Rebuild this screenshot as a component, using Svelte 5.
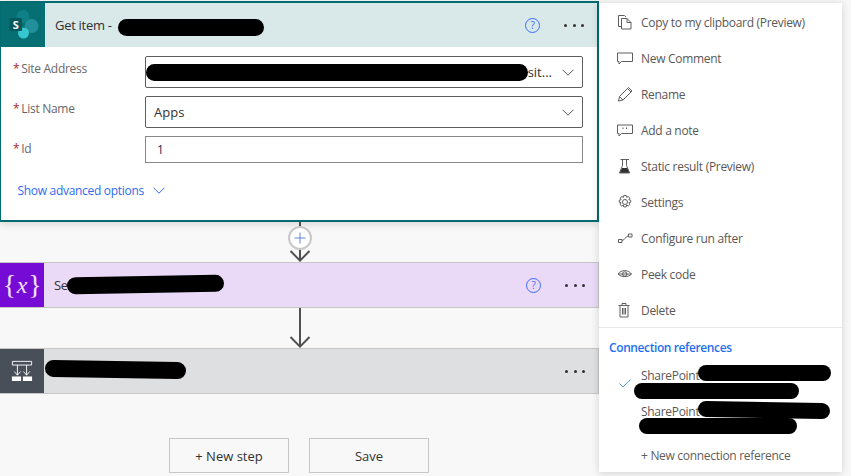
<script>
  const menuItems = [
    { label: 'Copy to my clipboard (Preview)', icon: 'copy' },
    { label: 'New Comment', icon: 'comment' },
    { label: 'Rename', icon: 'pencil' },
    { label: 'Add a note', icon: 'note' },
    { label: 'Static result (Preview)', icon: 'flask' },
    { label: 'Settings', icon: 'gear' },
    { label: 'Configure run after', icon: 'runafter' },
    { label: 'Peek code', icon: 'eye' },
    { label: 'Delete', icon: 'trash' }
  ]

  // the black scribbles over private names: x, y, width, height, tilt
  const scribbles = [
    [118, 19, 146, 17, 0],
    [146, 64, 382, 17, 0],
    [67, 276, 157, 17, -1],
    [45, 361, 141, 17, 1],
    [698, 365, 133, 16, 0],
    [634, 383, 165, 16, 0],
    [698, 402, 132, 16, 1],
    [639, 418, 158, 16, 0]
  ]
</script>

<div class="page">
  <main class="canvas">
    <section class="card active">
      <header class="head teal">
        <div class="tile teal-tile">
          <svg width="34" height="34" viewBox="0 0 34 34">
            <circle cx="17" cy="8.500" r="6.500" fill="#0f8085" />
            <circle cx="25.500" cy="18" r="7" fill="#21909a" />
            <circle cx="17.500" cy="25" r="5.500" fill="#37c6d0" />
            <rect x="3.500" y="10" width="12.500" height="13" rx="1" fill="#05585c" />
            <text x="9.700" y="20.500" class="s-letter">S</text>
          </svg>
        </div>
        <span class="title">Get item -</span>
        <span class="help">?</span>
        <span class="dots"><i></i><i></i><i></i></span>
      </header>
      <div class="body">
        <div class="row">
          <label><b>*</b>Site Address</label>
          <div class="input select tall">
            <span class="value end">sit...</span>
            <svg class="chev" width="12" height="7" viewBox="0 0 12 7"><path d="M.5.7 6 6.2 11.5.7" /></svg>
          </div>
        </div>
        <div class="row">
          <label><b>*</b>List Name</label>
          <div class="input select tall">
            <span class="value">Apps</span>
            <svg class="chev" width="12" height="7" viewBox="0 0 12 7"><path d="M.5.7 6 6.2 11.5.7" /></svg>
          </div>
        </div>
        <div class="row">
          <label><b>*</b>Id</label>
          <div class="input plain"><span class="value">1</span></div>
        </div>
        <div class="advanced">
          Show advanced options
          <svg width="12" height="7" viewBox="0 0 12 7"><path d="M.5.7 6 6.2 11.5.7" /></svg>
        </div>
      </div>
    </section>

    <div class="link">
      <svg width="26" height="40" viewBox="0 0 26 40">
        <path class="wire" d="M13 0V39M3.500 29 13 38.600 22.500 29" />
        <circle cx="13" cy="16" r="11" fill="#fff" stroke="#c8c8c8" stroke-width="2" />
        <path d="M13 10.500v11M7.500 16h11" stroke="#5f86d8" stroke-width="1" fill="none" />
      </svg>
    </div>

    <section class="card">
      <header class="head purple">
        <div class="tile purple-tile"><span class="brace">&#123;</span><em>x</em><span class="brace">&#125;</span></div>
        <span class="title">Se</span>
        <span class="help">?</span>
        <span class="dots"><i></i><i></i><i></i></span>
      </header>
    </section>

    <div class="link">
      <svg width="26" height="40" viewBox="0 0 26 40">
        <path class="wire" d="M13 0V39M3.500 29 13 38.600 22.500 29" />
      </svg>
    </div>

    <section class="card">
      <header class="head grey">
        <div class="tile grey-tile">
          <svg width="22" height="22" viewBox="0 0 24 24">
            <path d="M1.500 1.500h21v4h-21zM7 5.500v11M17 5.500v11M3.500 12.500 7 16.500l3.500-4M13.500 12.500 17 16.500l3.500-4" fill="none" stroke="#fff" stroke-width="1" />
            <path d="M1 18h10v5H1zM13 18h10v5H13z" fill="#fff" />
          </svg>
        </div>
        <span class="title"></span>
        <span class="dots"><i></i><i></i><i></i></span>
      </header>
    </section>

    <div class="actions">
      <button>+ New step</button>
      <button>Save</button>
    </div>
  </main>

  <aside class="menu">
    <ul>
      {#each menuItems as item}
        <li>
          <svg class="ico" width="16" height="16" viewBox="0 0 16 16">
            {#if item.icon === 'copy'}
              <path d="M4.500 12.500H1.500V1.500h6l1.500 1.500M4.500 4.500h5.500l4 4v6.500H4.500zM10 4.500V8.500h4" />
            {:else if item.icon === 'comment'}
              <path d="M.5 3h15v8.500H4.500L2 14V11.500H.5z" />
            {:else if item.icon === 'pencil'}
              <path d="M1.500 15l1-4.500L11.500 1.500 15 5 6 14zM2.500 10.500 6 14M10.500 2.500 14 6" />
            {:else if item.icon === 'note'}
              <path d="M.5 3h15v8.500H4.500L2 14V11.500H.5zM6 5.500v1.500M9.500 5.500v1.500" />
            {:else if item.icon === 'flask'}
              <path class="solid" d="M5 10h5.500L13 15H2.500z" />
              <path d="M3.500 1.500h8.500M5.500 1.500v6L2.500 15h10l-3-7.500v-6" />
            {:else if item.icon === 'gear'}
              <circle cx="8" cy="8" r="2.500" />
              <path d="M6.800 1.500h2.400l.4 1.800 1.600-.8 1.700 1.600-1 1.600 1.800.5v2.100l-1.800.5 1 1.600-1.700 1.600-1.600-1-.4 1.900H6.800l-.4-1.900-1.600 1-1.700-1.600 1-1.600-1.800-.5V6.200l1.800-.5-1-1.600 1.700-1.600 1.600.8z" />
            {:else if item.icon === 'runafter'}
              <path d="M1.500 9.500h3.500v3H1.500zM11.500 4h3.500v3h-3.500zM5 10.500c3-.5 3-3.500 6.500-5" />
            {:else if item.icon === 'eye'}
              <path d="M1 8c3-4.500 10.500-4.500 13.500 0-3 3.500-10.500 3.500-13.500 0zM1 8h13.500" />
              <circle cx="7.700" cy="8" r="2.200" />
            {:else}
              <path d="M1.500 3.500h11M5 3.500V1.500h4v2M3 3.500V15h8V3.500M5.500 6v6.500M7 6v6.500M8.500 6v6.500" />
            {/if}
          </svg>
          {item.label}
        </li>
      {/each}
    </ul>
    <div class="refs">
      <h4>Connection references</h4>
      <div class="ref">
        <svg class="check" width="12" height="9" viewBox="0 0 12 9"><path d="M.5 4.500 4 8 11.500.7" /></svg>
        <div class="ref-name">SharePoint</div>
      </div>
      <div class="ref">
        <div class="ref-name">SharePoint</div>
      </div>
      <div class="new-ref">+ New connection reference</div>
    </div>
  </aside>

  {#each scribbles as [x, y, w, h, tilt]}
    <div class="scribble" style="left: {x}px; top: {y}px; width: {w}px; height: {h}px; transform: rotate({tilt}deg);"></div>
  {/each}
</div>

<style>
  :global(body) {
    margin: 0;
    background: #f8f8f8;
  }

  .page {
    position: relative;
    display: flex;
    width: 851px;
    height: 476px;
    overflow: hidden;
    font-family: "Open Sans", "Liberation Sans", sans-serif;
    font-size: 12px;
    letter-spacing: -0.3px;
    color: #323130;
  }

  .canvas {
    display: flex;
    flex-direction: column;
    width: 599px;
    flex: none;
    padding-top: 1px;
    box-sizing: border-box;
  }

  .card {
    border: solid #c8c6c4;
    border-width: 1px 1px 1px 0;
    box-sizing: border-box;
  }

  .card.active {
    margin-left: -1px;
    border: 2px solid #036c70;
    background: #fff;
    box-shadow: 0 2px 8px rgba(0, 0, 0, 0.14);
    height: 221px;
  }

  .link {
    display: flex;
    justify-content: center;
    height: 40px;
    flex: none;
  }

  .wire {
    fill: none;
    stroke: #505050;
    stroke-width: 2;
  }

  .head {
    display: flex;
    align-items: center;
    height: 44px;
  }

  .teal { background: #d9e8e8; }
  .purple { background: #eadaf8; }
  .grey { background: #dedfe1; }

  .tile {
    display: flex;
    align-items: center;
    justify-content: center;
    width: 44px;
    height: 100%;
    flex: none;
    color: #fff;
  }

  .teal-tile { background: #056f73; }
  .purple-tile { background: #770bd6; font-family: "Liberation Serif", serif; color: #efe2fb; }
  .grey-tile { background: #484f58; }

  .purple-tile em { font-size: 24px; margin: 0 1px; line-height: 1; }
  .brace { font-size: 28px; line-height: 1; }

  .s-letter {
    fill: #fff;
    font-size: 11px;
    font-weight: 700;
    text-anchor: middle;
  }

  .title {
    flex: 1;
    margin-left: 10px;
    font-size: 13px;
  }

  .help {
    display: flex;
    align-items: center;
    justify-content: center;
    width: 13px;
    height: 13px;
    border: 1px solid #3b6cff;
    border-radius: 50%;
    color: #3b6cff;
    font-size: 10px;
    margin-right: 24px;
  }

  .dots {
    display: flex;
    gap: 5.500px;
    margin-right: 13px;
  }

  .dots i {
    width: 3px;
    height: 3px;
    border-radius: 50%;
    background: #323130;
  }

  .body {
    padding: 9px 14px 0 12px;
  }

  .row {
    display: flex;
    margin-bottom: 8px;
  }

  label {
    width: 132px;
    flex: none;
    padding-top: 4px;
    color: #69676a;
  }

  label b {
    color: #a4262c;
    font-weight: 400;
    margin-right: 2px;
  }

  .input {
    display: flex;
    align-items: center;
    flex: 1;
    box-sizing: border-box;
    background: #fff;
  }

  .tall {
    height: 32px;
    border: 1px solid #605e5c;
    border-radius: 2px;
    padding: 0 8px;
    font-size: 13px;
    letter-spacing: 0;
  }

  .plain {
    height: 27px;
    border: 1px solid #8a8886;
    padding: 0 11px;
    color: #1b2a5a;
  }

  .value { flex: 1; }
  .end { text-align: right; margin-right: 10px; }

  .chev, .advanced svg {
    fill: none;
    stroke: #605e5c;
    stroke-width: 1;
  }

  .advanced {
    display: flex;
    align-items: center;
    gap: 9px;
    margin: 19px 0 0 4.500px;
    color: #2e6bf0;
  }

  .advanced svg { stroke: #2e6bf0; }

  .actions {
    display: flex;
    justify-content: flex-start;
    gap: 20px;
    margin: 44px 0 0 169px;
  }

  button {
    width: 120px;
    height: 35px;
    border: 1px solid #c8c6c4;
    background: #f8f8f8;
    font: inherit;
    font-size: 13px;
    letter-spacing: 0;
    color: #323130;
    padding: 0;
  }

  .menu {
    width: 243px;
    height: 469px;
    margin-top: 3px;
    background: #fff;
    box-shadow: 0 1px 8px rgba(0, 0, 0, 0.16);
    flex: none;
  }

  ul {
    list-style: none;
    margin: 0;
    padding: 1px 0 0;
    border-bottom: 1px solid #e8e8e8;
    height: 323px;
  }

  li {
    display: flex;
    align-items: center;
    gap: 8px;
    height: 36px;
    padding-left: 18px;
    color: #5a5856;
  }

  .ico {
    fill: none;
    stroke: #605e5c;
    stroke-width: 1;
    flex: none;
  }

  .solid {
    fill: #323130;
    stroke: none;
  }

  .refs {
    padding: 0 0 0 10px;
  }

  h4 {
    margin: 11px 0 11px;
    font-size: 12px;
    font-weight: 600;
    letter-spacing: -0.4px;
    color: #1e6ff0;
  }

  .ref {
    position: relative;
    height: 36px;
    padding-left: 32px;
    color: #5a5856;
  }

  .check {
    position: absolute;
    left: 10px;
    top: 12px;
    fill: none;
    stroke: #4a9fe8;
    stroke-width: 1;
  }

  .new-ref {
    margin: 8px 0 0 32px;
    color: #605e5c;
  }

  .scribble {
    position: absolute;
    background: #000;
    border-radius: 9px;
  }
</style>
